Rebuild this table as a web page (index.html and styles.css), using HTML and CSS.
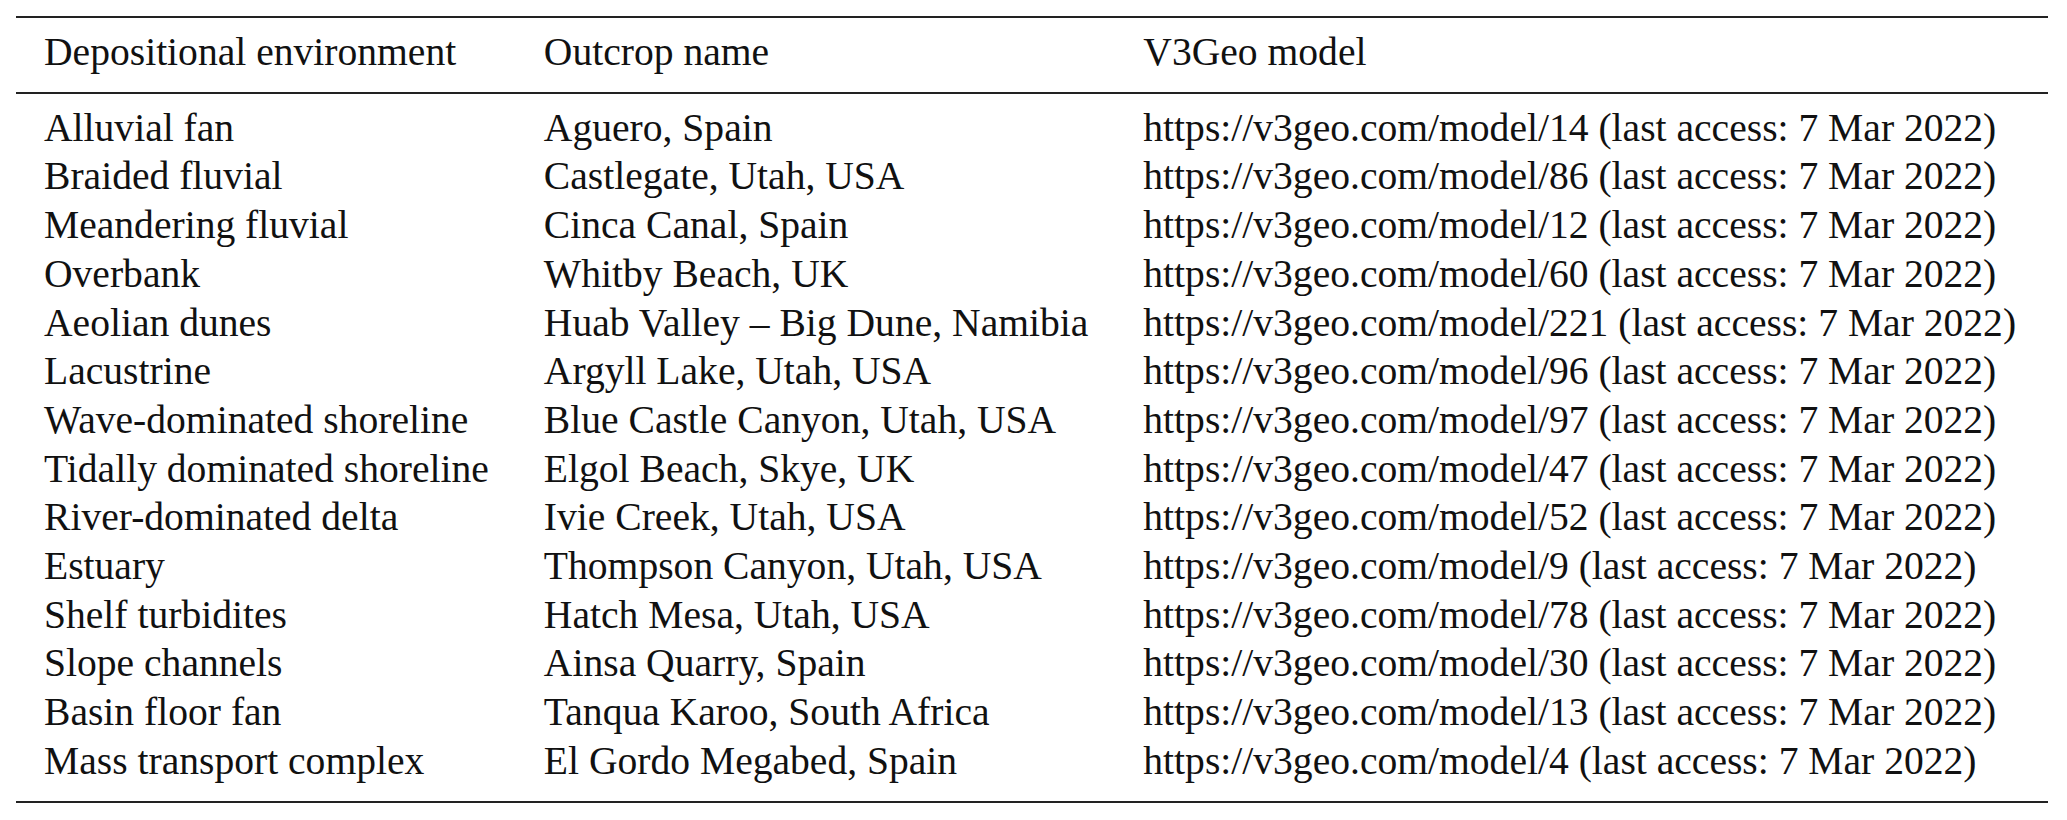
FILE: index.html
```html
<!DOCTYPE html>
<html lang="en">
<head>
<meta charset="utf-8">
<title>V3Geo models</title>
<link rel="stylesheet" href="styles.css">
</head>
<body>
<div class="wrap">
<table class="data">
<thead>
<tr><th>Depositional environment</th><th>Outcrop name</th><th>V3Geo model</th></tr>
</thead>
<tbody>
<tr><td>Alluvial fan</td><td>Aguero, Spain</td><td>https://v3geo.com/model/14 (last access: 7 Mar 2022)</td></tr>
<tr><td>Braided fluvial</td><td>Castlegate, Utah, USA</td><td>https://v3geo.com/model/86 (last access: 7 Mar 2022)</td></tr>
<tr><td>Meandering fluvial</td><td>Cinca Canal, Spain</td><td>https://v3geo.com/model/12 (last access: 7 Mar 2022)</td></tr>
<tr><td>Overbank</td><td>Whitby Beach, UK</td><td>https://v3geo.com/model/60 (last access: 7 Mar 2022)</td></tr>
<tr><td>Aeolian dunes</td><td>Huab Valley – Big Dune, Namibia</td><td>https://v3geo.com/model/221 (last access: 7 Mar 2022)</td></tr>
<tr><td>Lacustrine</td><td>Argyll Lake, Utah, USA</td><td>https://v3geo.com/model/96 (last access: 7 Mar 2022)</td></tr>
<tr><td>Wave-dominated shoreline</td><td>Blue Castle Canyon, Utah, USA</td><td>https://v3geo.com/model/97 (last access: 7 Mar 2022)</td></tr>
<tr><td>Tidally dominated shoreline</td><td>Elgol Beach, Skye, UK</td><td>https://v3geo.com/model/47 (last access: 7 Mar 2022)</td></tr>
<tr><td>River-dominated delta</td><td>Ivie Creek, Utah, USA</td><td>https://v3geo.com/model/52 (last access: 7 Mar 2022)</td></tr>
<tr><td>Estuary</td><td>Thompson Canyon, Utah, USA</td><td>https://v3geo.com/model/9 (last access: 7 Mar 2022)</td></tr>
<tr><td>Shelf turbidites</td><td>Hatch Mesa, Utah, USA</td><td>https://v3geo.com/model/78 (last access: 7 Mar 2022)</td></tr>
<tr><td>Slope channels</td><td>Ainsa Quarry, Spain</td><td>https://v3geo.com/model/30 (last access: 7 Mar 2022)</td></tr>
<tr><td>Basin floor fan</td><td>Tanqua Karoo, South Africa</td><td>https://v3geo.com/model/13 (last access: 7 Mar 2022)</td></tr>
<tr><td>Mass transport complex</td><td>El Gordo Megabed, Spain</td><td>https://v3geo.com/model/4 (last access: 7 Mar 2022)</td></tr>
</tbody>
</table>
</div>
</body>
</html>
```

FILE: styles.css
```css
html, body {
  margin: 0;
  padding: 0;
  background: #ffffff;
}

.wrap {
  padding: 16px 0 0 16px;
}

.data {
  border-collapse: collapse;
  font-family: "Liberation Serif", "Times New Roman", serif;
  font-size: 39.6px;
  line-height: 48.7px;
  color: #111111;
  border-top: 2.5px solid #222222;
  border-bottom: 2.5px solid #222222;
}

.data th,
.data td {
  text-align: left;
  font-weight: normal;
  white-space: nowrap;
  padding: 0 27px 0 28px;
}

.data th:last-child,
.data td:last-child {
  padding-right: 32px;
}

.data thead th {
  padding-top: 10px;
  padding-bottom: 15px;
  border-bottom: 2px solid #222222;
}

.data tbody tr:first-child td {
  padding-top: 10px;
}

.data tbody tr:last-child td {
  padding-bottom: 15px;
}
```
